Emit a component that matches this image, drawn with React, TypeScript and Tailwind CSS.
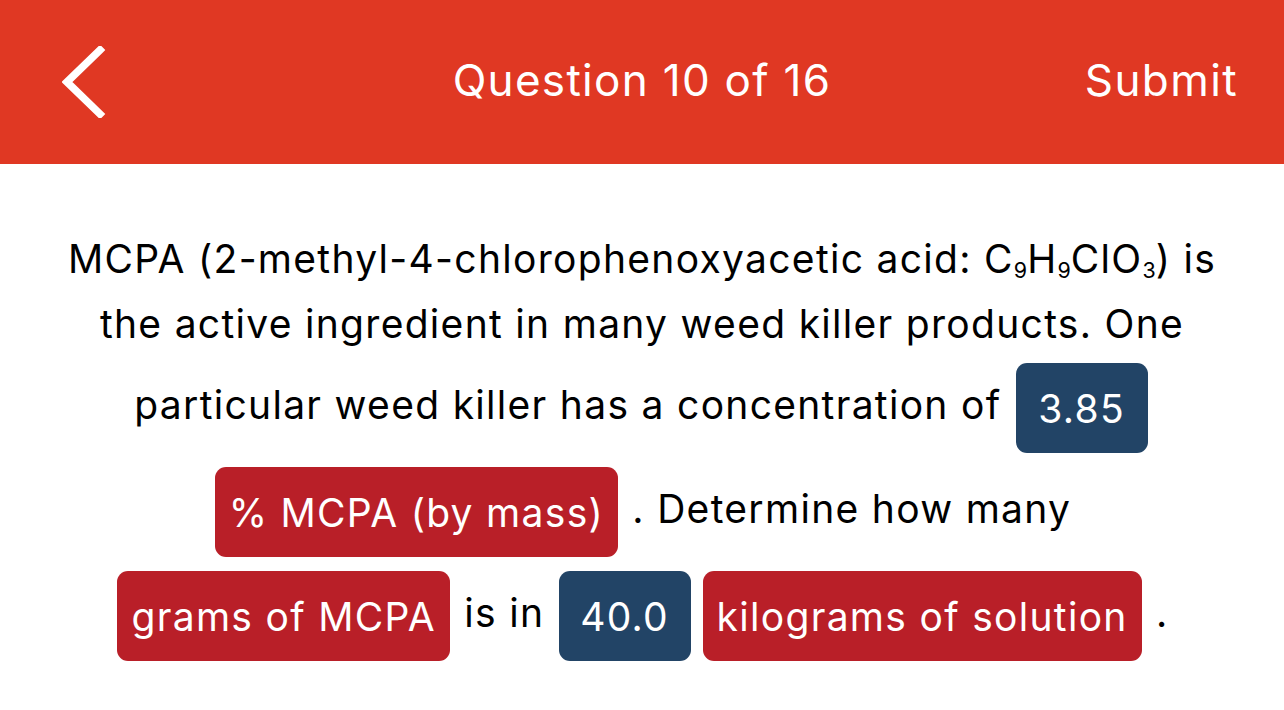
import React from 'react';

const font = { fontFamily: 'Inter, "Noto Sans", sans-serif' };

function Blue({ children }: { children: React.ReactNode }) {
  return (
    <span className="inline-flex items-center justify-center align-middle w-[132px] h-[90px] mx-[2px] my-[7px] rounded-[11px] bg-[#224466] text-white">
      {children}
    </span>
  );
}

function Red({ children }: { children: React.ReactNode }) {
  return (
    <span className="inline-flex items-center justify-center align-middle h-[90px] px-[14px] mx-[2px] my-[7px] rounded-[11px] bg-[#b91f28] text-white">
      {children}
    </span>
  );
}

export default function App() {
  return (
    <div className="w-[1284px] h-[710px] bg-white overflow-hidden" style={font}>
      <header className="h-[164px] bg-[#e03823] grid grid-cols-[1fr_auto_1fr] items-center px-[46px] text-white">
        <button className="w-[44px] h-[72px] ml-[16px] flex items-center">
          <svg width="44" height="72" viewBox="0 0 44 72">
            <polyline points="38,4 5,36 38,68" fill="none" stroke="white" strokeWidth="7.5" strokeLinecap="square" strokeLinejoin="miter" />
          </svg>
        </button>
        <h1 className="text-[44px] font-normal tracking-[1.3px] pb-[4px]">Question 10 of 16</h1>
        <button className="text-[44px] tracking-[1.4px] justify-self-end pb-[4px]">Submit</button>
      </header>

      <main className="px-[56px] pt-[62px] text-center text-[39px] leading-[65px] text-black tracking-[1.3px]">
        <p>
          MCPA (2-methyl-4-chlorophenoxyacetic acid: C<sub className="text-[0.55em] tracking-normal">9</sub>H
          <sub className="text-[0.55em] tracking-normal">9</sub>ClO<sub className="text-[0.55em] tracking-normal">3</sub>) is the
          active ingredient in many weed killer products. One particular weed killer has a concentration of{' '}
          <Blue>3.85</Blue> <span className="whitespace-nowrap"><Red>% MCPA (by mass)</Red> .</span> Determine how many{' '}
          <Red>grams of MCPA</Red> is in <Blue>40.0</Blue>
          <span className="whitespace-nowrap"><span className="inline-block w-[8px]" /><Red>kilograms of solution</Red> .</span>
        </p>
      </main>
    </div>
  );
}
